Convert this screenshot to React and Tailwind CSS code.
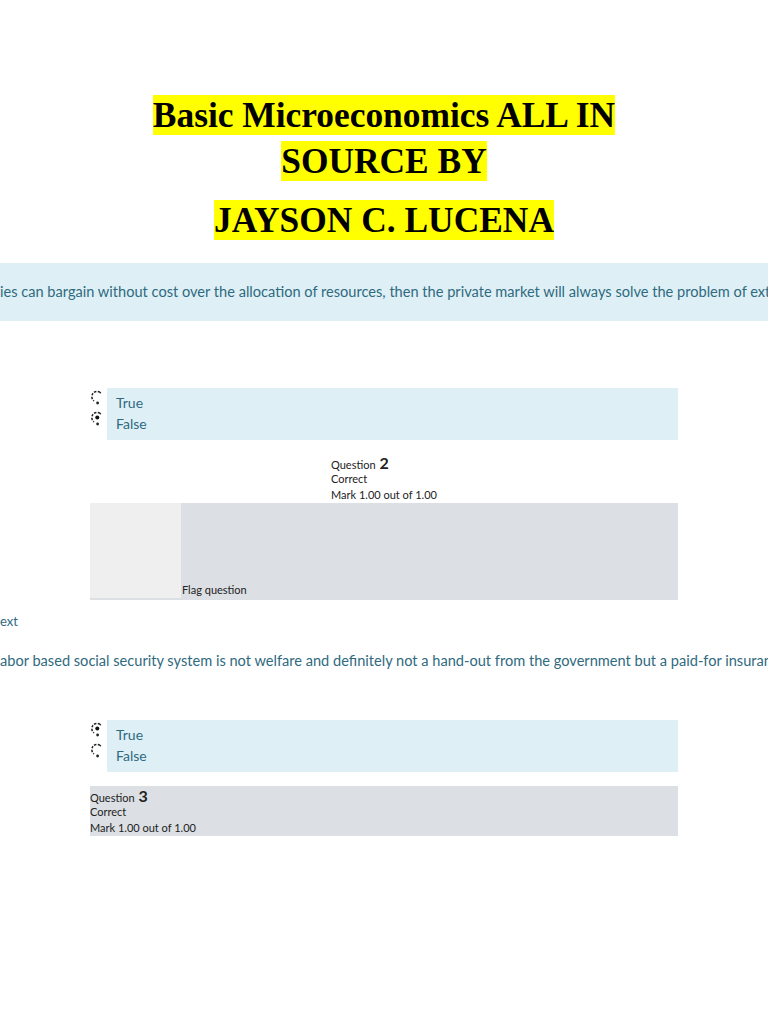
import React from "react";

const Radio = ({ checked }) => (
  <svg width="13" height="16" viewBox="0 0 13 16" className="block">
    <path d="M9 2.4 A5 5 0 1 0 3 10.8" fill="none" stroke="#222" strokeWidth="1.5" strokeDasharray="2.4 1.3" />
    <circle cx="6.6" cy="13" r="1.4" fill="#222" />
    <circle cx="9.4" cy="2.8" r="0.8" fill="#222" />
    {checked && <circle cx="6.3" cy="6.6" r="2" fill="#111" />}
  </svg>
);

const AnswerBox = ({ selected }) => (
  <div className="ml-[90px] w-[588px] h-[52px] flex bg-[#def0f6]">
    <div className="w-[17px] bg-white flex flex-col pt-[2px] gap-[5px] pl-[1px]">
      <Radio checked={selected === "True"} />
      <Radio checked={selected === "False"} />
    </div>
    <div className="flex-1 pl-[9px] pt-[4px] text-[14px] leading-[21px] text-[#2f6a80]">
      <div>True</div>
      <div>False</div>
    </div>
  </div>
);

const QuestionInfo = ({ num }) => (
  <div className="text-[11px] leading-[16px] text-[#222]">
    <div className="flex items-baseline gap-[4px] h-[16px]">
      <span>Question</span>
      <span className="text-[16px] font-bold leading-[16px]">{num}</span>
    </div>
    <div>Correct</div>
    <div>Mark 1.00 out of 1.00</div>
  </div>
);

export default function App() {
  return (
    <div className="w-[768px] min-h-[1024px] bg-white overflow-hidden" style={{ fontFamily: "Lato, 'Liberation Sans', sans-serif" }}>
      <div className="pt-[92px] text-center font-bold text-[35.4px] text-black" style={{ fontFamily: "'Liberation Serif', serif" }}>
        <p className="leading-[46px]">
          <span className="bg-[#ffff00]">Basic Microeconomics ALL IN</span>
          <br />
          <span className="bg-[#ffff00]">SOURCE BY</span>
        </p>
        <p className="mt-[13px] leading-[46px]">
          <span className="bg-[#ffff00]">JAYSON C. LUCENA</span>
        </p>
      </div>

      <div className="mt-[20px] h-[58px] bg-[#def0f6] flex items-center overflow-hidden">
        <p className="whitespace-nowrap text-[14.6px] text-[#2f6a80]">
          ies can bargain without cost over the allocation of resources, then the private market will always solve the problem of externalities on its own.
        </p>
      </div>

      <div className="mt-[67px]">
        <AnswerBox selected="False" />
      </div>

      <div className="ml-[331px] mt-[15px]">
        <QuestionInfo num="2" />
      </div>

      <div className="ml-[90px] w-[588px] h-[97px] flex">
        <div className="w-[91px] bg-[#efefef] border-b-2 border-[#dcdfe3]"></div>
        <div className="flex-1 bg-[#dcdfe3] flex items-end pl-[1px] pb-[2px] text-[11px] text-[#222]">
          Flag question
        </div>
      </div>

      <p className="mt-[12px] text-[13px] leading-[18px] text-[#2f6a80]">ext</p>

      <div className="mt-[20px] overflow-hidden">
        <p className="whitespace-nowrap text-[14.6px] text-[#2f6a80]">
          abor based social security system is not welfare and definitely not a hand-out from the government but a paid-for insurance.
        </p>
      </div>

      <div className="mt-[48px]">
        <AnswerBox selected="True" />
      </div>

      <div className="ml-[90px] mt-[14px] w-[588px] h-[50px] bg-[#dcdfe3] pt-[2px]">
        <QuestionInfo num="3" />
      </div>
    </div>
  );
}
